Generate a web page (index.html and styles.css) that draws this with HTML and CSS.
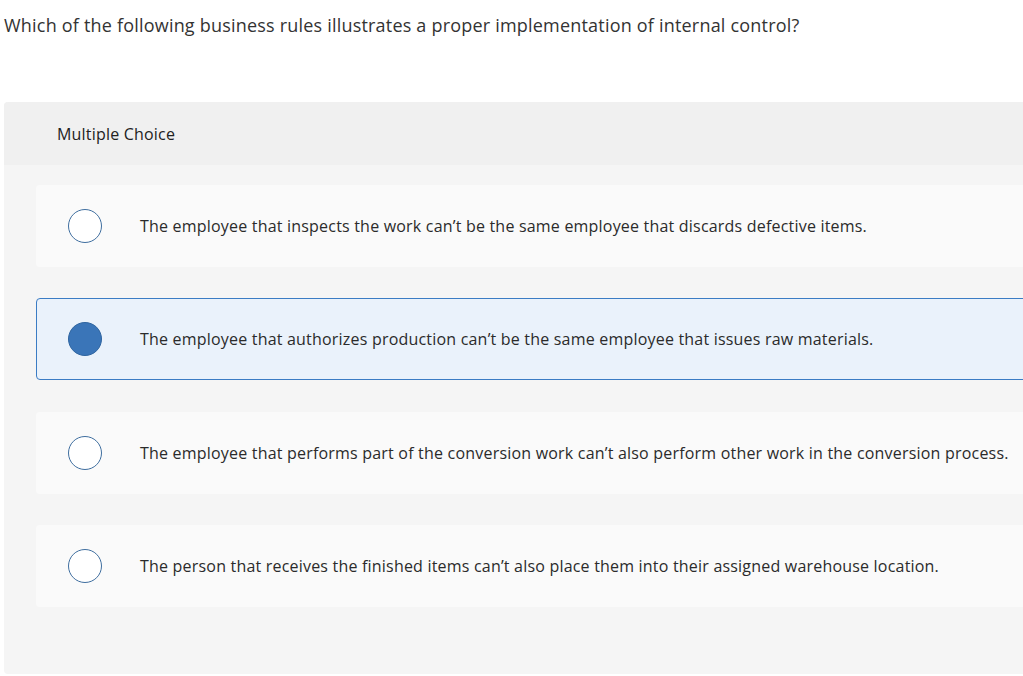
FILE: index.html
```html
<!DOCTYPE html>
<html>
<head>
<meta charset="utf-8">
<link rel="stylesheet" href="styles.css">
</head>
<body>
<div class="page">
  <p class="question">Which of the following business rules illustrates a proper implementation of internal control?</p>
  <div class="panel">
    <div class="panel-head">Multiple Choice</div>
    <div class="panel-body">
      <div class="option">
        <span class="radio"></span>
        <span class="label">The employee that inspects the work can’t be the same employee that discards defective items.</span>
      </div>
      <div class="option selected">
        <span class="radio"></span>
        <span class="label">The employee that authorizes production can’t be the same employee that issues raw materials.</span>
      </div>
      <div class="option">
        <span class="radio"></span>
        <span class="label">The employee that performs part of the conversion work can’t also perform other work in the conversion process.</span>
      </div>
      <div class="option">
        <span class="radio"></span>
        <span class="label">The person that receives the finished items can’t also place them into their assigned warehouse location.</span>
      </div>
    </div>
  </div>
</div>
</body>
</html>
```

FILE: styles.css
```css
html, body {
  margin: 0;
  padding: 0;
  background: #ffffff;
  overflow: hidden;
}
.page {
  padding: 0 0 0 4px;
  font-family: "Open Sans", "Liberation Sans", Arial, sans-serif;
  color: #333333;
  letter-spacing: 0.2px;
}
.question {
  margin: 0;
  padding-top: 13px;
  font-size: 18px;
  line-height: 24px;
  height: 89px;
}
.panel {
  margin-right: -40px;
  border-radius: 4px;
  overflow: hidden;
  background: #f5f5f5;
}
.panel-head {
  background: #f0f0f0;
  height: 63px;
  padding-left: 53px;
  display: flex;
  align-items: center;
  font-size: 16px;
  color: #222;
}
.panel-body {
  padding: 20px 0 67px 32px;
  display: flex;
  flex-direction: column;
  gap: 31.3px;
}
.option {
  height: 82px;
  box-sizing: border-box;
  background: #fafafa;
  border-radius: 4px;
  display: flex;
  align-items: center;
  padding-left: 31px;
  border: 1px solid transparent;
}
.option.selected {
  background: #eaf2fb;
  border-color: #3b7cc4;
}
.radio {
  width: 34px;
  height: 34px;
  box-sizing: border-box;
  border-radius: 50%;
  border: 1.5px solid #3f6e9f;
  background: #ffffff;
  flex: none;
}
.option.selected .radio {
  background: #3a75b8;
  border-color: #2f65a0;
}
.label {
  margin-left: 38px;
  font-size: 16px;
  color: #2b2b2b;
}
```
